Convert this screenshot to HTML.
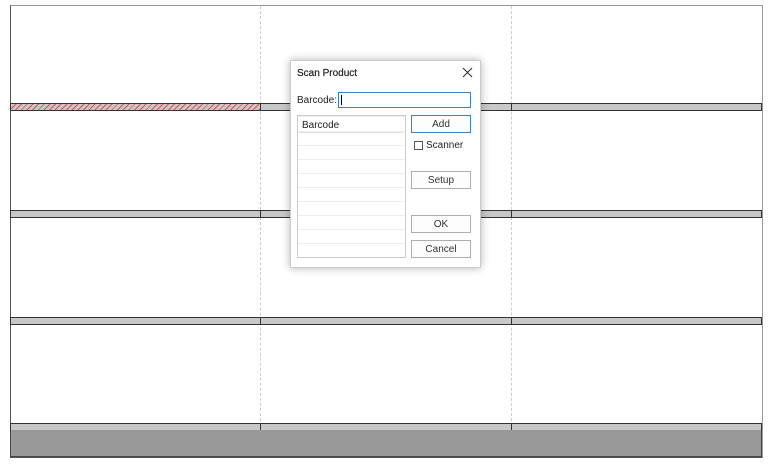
<!DOCTYPE html>
<html><head><style>
body{margin:0;width:768px;height:464px;background:#fff;position:relative;overflow:hidden;font-family:"Liberation Sans",sans-serif;font-size:10px;color:#222}
.a{position:absolute;box-sizing:border-box}
.bar{position:absolute;left:10px;width:752px;height:8px;background:#c8c8c8;border:1px solid #333;box-sizing:border-box}
.dash{position:absolute;width:0;border-left:1px dashed #ccc}
.tick{position:absolute;width:1px;height:8px;background:#333}
.btn{position:absolute;left:411px;width:60px;height:18px;border:1px solid #adadad;background:#fdfdfd;text-align:center;line-height:18px;box-sizing:border-box;color:#333}
</style></head><body>
<div class="a" style="left:10px;top:5px;width:753px;height:453px;border:1px solid #555;border-top-color:#999;border-right-color:#999"></div>
<div class="dash" style="left:260px;top:6px;height:420px"></div>
<div class="dash" style="left:511px;top:6px;height:420px"></div>
<div class="bar" style="top:103px"></div>
<div class="a" style="left:11px;top:104px;width:249px;height:6px;background:repeating-linear-gradient(135deg,#c8c8c8 0 3px,#e05050 3px 4px)"></div>
<div class="bar" style="top:210px"></div>
<div class="bar" style="top:317px"></div>
<div class="bar" style="top:423px"></div>
<div class="tick" style="left:260px;top:103px"></div><div class="tick" style="left:511px;top:103px"></div>
<div class="tick" style="left:260px;top:210px"></div><div class="tick" style="left:511px;top:210px"></div>
<div class="tick" style="left:260px;top:317px"></div><div class="tick" style="left:511px;top:317px"></div>
<div class="tick" style="left:260px;top:423px"></div><div class="tick" style="left:511px;top:423px"></div>
<div class="a" style="left:10px;top:430px;width:752px;height:27px;background:#999;border:1px solid #444;border-top:none"></div>

<div class="a" style="left:290px;top:60px;width:191px;height:208px;background:#fff;border:1px solid #ccc;box-shadow:0 0 8px rgba(0,0,0,.3)"></div>
<div class="a" style="left:297px;top:68px;font-size:10px;color:#222;-webkit-text-stroke:0.2px #222">Scan Product</div>
<svg class="a" style="left:462px;top:67px" width="11" height="11"><path d="M1 1L10 10M10 1L1 10" stroke="#333" stroke-width="1.1"/></svg>
<div class="a" style="left:297px;top:95px">Barcode:</div>
<div class="a" style="left:338px;top:92px;width:133px;height:16px;border:1px solid #3c7fc8"></div>
<div class="a" style="left:341px;top:95px;width:1px;height:10px;background:#000"></div>
<div class="a" style="left:297px;top:115px;width:109px;height:143px;border:1px solid #ccc;background:repeating-linear-gradient(#fff 0 13px,#eee 13px 14px);background-position:0 2px"></div>
<div class="a" style="left:299px;top:117px;width:104px;height:16px;border-bottom:1px solid #ddd;padding:3px 3px">Barcode</div>
<div class="btn" style="top:115px;border:1px solid #3c7fc8">Add</div>
<div class="a" style="left:414px;top:141px;width:9px;height:9px;border:1px solid #555;background:#fff"></div>
<div class="a" style="left:426px;top:140px">Scanner</div>
<div class="btn" style="top:171px">Setup</div>
<div class="btn" style="top:215px">OK</div>
<div class="btn" style="top:240px">Cancel</div>
</body></html>
